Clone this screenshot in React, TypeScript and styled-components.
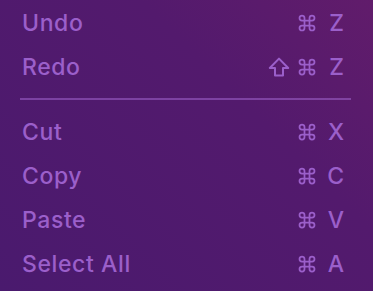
import React from 'react';
import styled, { createGlobalStyle } from 'styled-components';

const GlobalStyle = createGlobalStyle`
  html, body {
    margin: 0;
    padding: 0;
    height: 100%;
  }
  body {
    background: linear-gradient(225deg, #611c6b 0%, #531a6d 35%, #4a1a6e 100%);
    font-family: Inter, "Liberation Sans", sans-serif;
  }
`;

const Menu = styled.div`
  width: 373px;
  height: 291px;
  box-sizing: border-box;
  padding: 1px 29px 0 22px;
  display: flex;
  flex-direction: column;
`;

const Row = styled.div`
  height: 44px;
  display: flex;
  align-items: center;
  justify-content: space-between;
  color: #9b5fca;
  font-size: 23px;
  font-weight: 500;
  letter-spacing: 0.6px;
`;

const Label = styled.span``;

const Keys = styled.span`
  display: flex;
  align-items: center;
  gap: 7px;
`;

const Key = styled.span`
  width: 20px;
  text-align: right;
  letter-spacing: 0;
`;

const Divider = styled.hr`
  border: none;
  height: 2px;
  background: rgba(160, 100, 205, 0.55);
  margin: 9px -7px 10px -2px;
`;

const CommandIcon = () => (
  <svg width="20" height="20" viewBox="0 0 24 24" fill="none" stroke="currentColor" strokeWidth="2.1" strokeLinecap="round" strokeLinejoin="round">
    <path d="M15 6v12a3 3 0 1 0 3-3H6a3 3 0 1 0 3 3V6a3 3 0 1 0-3 3h12a3 3 0 1 0-3-3" />
  </svg>
);

const ShiftIcon = () => (
  <svg width="22" height="20" viewBox="0 0 22 20" fill="none" stroke="currentColor" strokeWidth="2" strokeLinejoin="round">
    <path d="M7 18.5v-7.5H1.8L11 1.6l9.2 9.4H15v7.5z" />
  </svg>
);

type Item = { label: string; keyName: string; shift?: boolean };

const Shortcut: React.FC<Item> = ({ label, keyName, shift }) => (
  <Row>
    <Label>{label}</Label>
    <Keys>
      {shift && <ShiftIcon />}
      <CommandIcon />
      <Key>{keyName}</Key>
    </Keys>
  </Row>
);

const history: Item[] = [
  { label: 'Undo', keyName: 'Z' },
  { label: 'Redo', keyName: 'Z', shift: true },
];

const clipboard: Item[] = [
  { label: 'Cut', keyName: 'X' },
  { label: 'Copy', keyName: 'C' },
  { label: 'Paste', keyName: 'V' },
  { label: 'Select All', keyName: 'A' },
];

const App: React.FC = () => (
  <>
    <GlobalStyle />
    <Menu>
      {history.map((i) => (
        <Shortcut key={i.label} {...i} />
      ))}
      <Divider />
      {clipboard.map((i) => (
        <Shortcut key={i.label} {...i} />
      ))}
    </Menu>
  </>
);

export default App;
